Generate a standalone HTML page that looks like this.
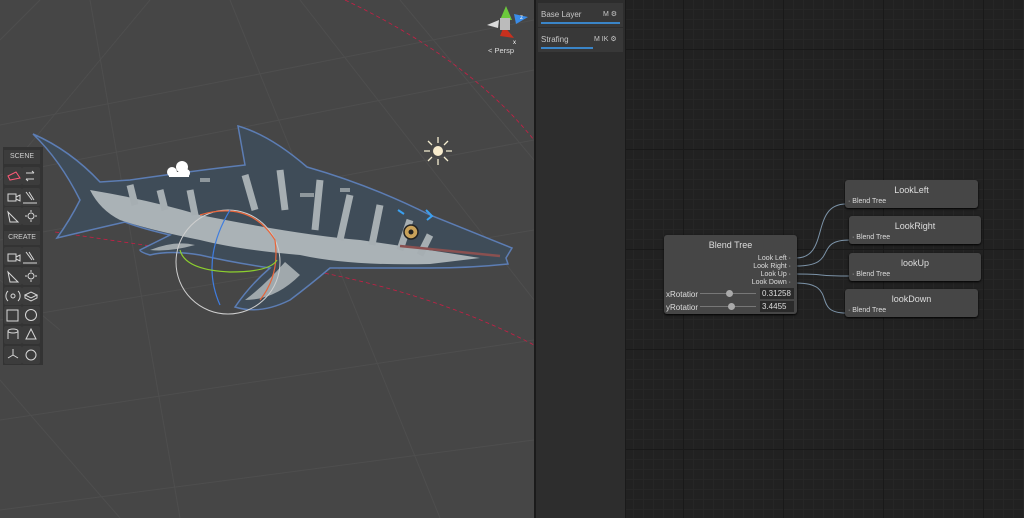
<!DOCTYPE html>
<html><head><meta charset="utf-8"><style>
*{margin:0;padding:0;box-sizing:border-box}
body{width:1024px;height:518px;overflow:hidden;background:#202020;font-family:"Liberation Sans",sans-serif;position:relative}
#scene{position:absolute;left:0;top:0;width:534px;height:518px;background:#464646;overflow:hidden}
#sep1{position:absolute;left:534px;top:0;width:2px;height:518px;background:#1b1b1b}
#layers{position:absolute;left:536px;top:0;width:89px;height:518px;background:#2d2d2d}
#sep2{position:absolute;left:625px;top:0;width:1px;height:518px;background:#1a1a1a}
#graph{position:absolute;left:626px;top:0;width:398px;height:518px;background-color:#212121;
background-image:linear-gradient(#191919 1px,transparent 1px),linear-gradient(90deg,#191919 1px,transparent 1px),linear-gradient(#262626 1px,transparent 1px),linear-gradient(90deg,#262626 1px,transparent 1px);
background-size:100px 100px,100px 100px,10px 10px,10px 10px;background-position:0 49px,57px 0,0 9px,7px 0}
.layer{position:absolute;left:2px;width:85px;height:24px;background:#383838;color:#c8c8c8;font-size:8px}
.layer span{position:absolute;left:3px;top:7px}
.layer b{position:absolute;top:7px;font-weight:normal;font-size:7px}
.layer i{position:absolute;left:3px;bottom:3px;height:2px;background:#3a85c8}
.node{position:absolute;background:#464646;border-radius:3px;color:#ddd;font-size:9px;box-shadow:0 1px 2px #000}
.node .t{position:absolute;width:100%;text-align:center;top:5px}
.node .s{position:absolute;left:3px;bottom:3px;font-size:7px;color:#ddd}
.tb{position:absolute;left:2px;background:#333;width:40px}
.cell{position:absolute;width:18px;height:18px;background:#3c3c3c;border-radius:2px}
</style></head><body>
<div id="scene">
<svg width="534" height="518" style="position:absolute;left:0;top:0">
<g stroke="#4e4e4e" stroke-width="1" fill="none">
<path d="M0 125 L534 20"/><path d="M0 175 L534 70"/><path d="M0 240 L534 140"/><path d="M0 320 L534 230"/><path d="M0 420 L534 340"/><path d="M0 510 L534 440"/>
<path d="M90 0 L180 518"/><path d="M230 0 L440 518"/><path d="M40 0 L0 40"/><path d="M300 0 L534 300"/><path d="M400 0 L534 160"/><path d="M150 0 L0 180"/><path d="M0 380 L120 518"/><path d="M0 280 L60 330"/>
</g>
<path d="M345 0 Q470 60 534 140" stroke="#c81e45" stroke-width="0.8" stroke-dasharray="4 3" fill="none"/>
<path d="M55 232 L260 262 Q420 285 534 345" stroke="#c81e45" stroke-width="0.8" stroke-dasharray="4 3" fill="none"/>
<path d="M33 134 Q70 150 100 182 L130 180 Q200 170 245 165 L238 126 Q270 135 307 167 Q370 185 430 215 Q480 235 512 248 L506 258 L508 264 Q470 268 430 268 L330 268 Q310 285 290 300 Q260 315 235 307 Q250 285 270 268 Q230 262 200 255 Q170 250 150 255 Q140 252 140 250 Q160 240 170 235 Q140 228 125 222 Q90 230 57 238 Q70 220 80 200 Q60 160 33 134Z" fill="#3f4c58" stroke="#5c7db4" stroke-width="1.5"/>
<path d="M90 190 Q150 200 200 215 Q300 235 360 240 Q430 250 480 258 L430 264 Q350 266 300 255 Q240 250 200 240 Q150 230 120 220 Q100 210 90 190Z" fill="#aab2b6"/>
<path d="M245 175 L255 210 M280 170 L285 210 M320 180 L315 230 M350 195 L340 240 M380 205 L372 245 M410 220 L400 250 M190 190 L195 215 M160 190 L165 210 M130 185 L135 205 M430 235 L420 255" stroke="#a6aeb2" stroke-width="7" fill="none"/>
<path d="M200 180 h10 M300 195 h14 M340 190 h10" stroke="#8e979c" stroke-width="4"/>
<path d="M285 262 Q265 285 245 300 Q275 300 300 275Z" fill="#a0a8ac"/>
<path d="M150 250 Q175 240 195 245 Q170 252 150 250Z" fill="#a0a8ac"/>
<circle cx="411" cy="232" r="7" fill="#c9a25a" stroke="#222" stroke-width="1.5"/><circle cx="411" cy="232" r="2.5" fill="#222"/>
<path d="M400 246 L500 256" stroke="#8a5050" stroke-width="2.5"/>
<circle cx="228" cy="262" r="52" fill="none" stroke="#cfcfcf" stroke-width="1"/>
<path d="M200 215 Q250 200 275 240 Q280 275 260 300" stroke="#e8653a" stroke-width="1.2" fill="none"/>
<path d="M230 210 Q200 260 220 305" stroke="#3f7de0" stroke-width="1.2" fill="none"/>
<path d="M180 250 Q185 270 230 272 Q270 272 277 260" stroke="#8ccf2e" stroke-width="1.2" fill="none"/>
<path d="M398 210 L404 214 M426 210 L432 216 L427 220" stroke="#3aa0f0" stroke-width="2" fill="none"/>
<circle cx="172" cy="172" r="5" fill="#fff"/><circle cx="182" cy="167" r="6" fill="#fff"/><circle cx="186" cy="173" r="4" fill="#fff"/><rect x="169" y="172" width="20" height="5" fill="#fff"/>
<g stroke="#f4ecd0" stroke-width="1.3"><path d="M438 143v-6M438 159v6M430 151h-6M446 151h6M432 145l-4-4M444 145l4-4M432 157l-4 4M444 157l4 4"/></g>
<circle cx="438" cy="151" r="5" fill="#f8eccd"/>
<path d="M506 6 L512 20 L500 20Z" fill="#6cc83c"/><path d="M514 14 L528 17 L516 24Z" fill="#3a8ce8"/>
<path d="M487 25 L499 20 L498 28Z" fill="#dcdcdc"/><path d="M504 26 L514 38 L500 36Z" fill="#c8301e"/>
<rect x="500" y="18" width="10" height="12" fill="#bbb"/>
<text x="520" y="19" fill="#fff" font-size="6" font-family="Liberation Sans">z</text>
<text x="513" y="44" fill="#fff" font-size="6" font-family="Liberation Sans">x</text>
<text x="488" y="53" fill="#ddd" font-size="7.5" font-family="Liberation Sans">&lt; Persp</text>
</svg>
<div class="tb" style="top:147px;height:85px;left:3px"></div>
<div class="tb" style="top:230px;height:135px;left:3px"></div>
<div style="position:absolute;left:4px;top:150px;width:36px;height:14px;background:#3c3c3c;color:#cfcfcf;font-size:7px;text-align:center;line-height:14px">SCENE</div>
<div style="position:absolute;left:4px;top:231px;width:36px;height:14px;background:#3c3c3c;color:#cfcfcf;font-size:7px;text-align:center;line-height:14px">CREATE</div>
<div class="cell" style="left:4px;top:167px"></div><div class="cell" style="left:22px;top:167px"></div>
<div class="cell" style="left:4px;top:188px"></div><div class="cell" style="left:22px;top:188px"></div>
<div class="cell" style="left:4px;top:207px"></div><div class="cell" style="left:22px;top:207px"></div>
<div class="cell" style="left:4px;top:247px"></div><div class="cell" style="left:22px;top:247px"></div>
<div class="cell" style="left:4px;top:267px"></div><div class="cell" style="left:22px;top:267px"></div>
<div class="cell" style="left:4px;top:287px"></div><div class="cell" style="left:22px;top:287px"></div>
<div class="cell" style="left:4px;top:306px"></div><div class="cell" style="left:22px;top:306px"></div>
<div class="cell" style="left:4px;top:326px"></div><div class="cell" style="left:22px;top:326px"></div>
<div class="cell" style="left:4px;top:346px"></div><div class="cell" style="left:22px;top:346px"></div>
<svg width="44" height="370" style="position:absolute;left:0;top:0" fill="none" stroke="#d8d8d8" stroke-width="1">
<path d="M8 176 L16 172 L20 178 L10 180Z" stroke="#ff5a78"/><path d="M26 173h8M34 173l-2-2M26 179h8M26 179l2 2"/>
<rect x="8" y="194" width="8" height="7"/><path d="M16 197 l4-2v6l-4-2"/><path d="M26 192l6 8M29 192l5 8M23 203h14"/>
<path d="M8 212 L18 222 L10 222Z"/><circle cx="31" cy="216" r="3"/><path d="M31 210v2M31 220v2M25 216h2M35 216h2"/>
<rect x="8" y="254" width="8" height="7"/><path d="M16 257 l4-2v6l-4-2"/><path d="M26 252l6 8M29 252l5 8M23 263h14"/>
<path d="M8 272 L18 282 L10 282Z"/><circle cx="31" cy="276" r="3"/><path d="M31 270v2M31 280v2M25 276h2M35 276h2"/>
<circle cx="13" cy="296" r="2"/><path d="M8 291 a7 7 0 0 0 0 10M18 291 a7 7 0 0 1 0 10"/><path d="M25 295 l6-3 6 3-6 3z M25 295v3l6 3 6-3v-3"/>
<rect x="7" y="310" width="11" height="11"/><circle cx="31" cy="315" r="5.5"/>
<ellipse cx="13" cy="331" rx="5" ry="2"/><path d="M8 331v8M18 331v8"/><path d="M31 329l-5 10h10z"/>
<path d="M13 355v-6M13 355l-5 3M13 355l5 3"/><circle cx="31" cy="355" r="5"/>
</svg>
</div>
<div id="sep1"></div>
<div id="layers">
<div class="layer" style="top:3px"><span>Base Layer</span><b style="left:65px">M ⚙</b><i style="width:79px"></i></div>
<div class="layer" style="top:28px"><span>Strafing</span><b style="left:56px">M IK ⚙</b><i style="width:52px"></i></div>
</div>
<div id="sep2"></div>
<div id="graph"></div>
<svg width="1024" height="518" style="position:absolute;left:0;top:0" fill="none" stroke="#7c93a8" stroke-width="1">
<path d="M796 258 C830 258 810 204 846 204"/>
<path d="M796 266 C840 266 812 240 850 240"/>
<path d="M796 274 C830 274 812 276 850 276"/>
<path d="M796 283 C840 283 810 313 846 313"/>
</svg>
<div class="node" style="left:664px;top:235px;width:133px;height:79px">
<div class="t">Blend Tree</div>
<div style="position:absolute;right:6px;top:20px;text-align:right;font-size:7px;line-height:8px">Look Left ·<br>Look Right ·<br>Look Up ·<br>Look Down ·</div>
<div style="position:absolute;left:2px;top:55px;font-size:8px">xRotatior</div>
<div style="position:absolute;left:2px;top:68px;font-size:8px">yRotatior</div>
<div style="position:absolute;left:36px;top:58px;width:56px;height:1px;background:#777"></div>
<div style="position:absolute;left:36px;top:71px;width:56px;height:1px;background:#777"></div>
<div style="position:absolute;left:62px;top:55px;width:7px;height:7px;border-radius:50%;background:#aaa"></div>
<div style="position:absolute;left:64px;top:68px;width:7px;height:7px;border-radius:50%;background:#aaa"></div>
<div style="position:absolute;left:96px;top:53px;width:34px;height:11px;background:#2a2a2a;font-size:8px;padding-left:2px;line-height:11px;overflow:hidden">0.31258</div>
<div style="position:absolute;left:96px;top:66px;width:34px;height:11px;background:#2a2a2a;font-size:8px;padding-left:2px;line-height:11px;overflow:hidden">3.4455</div>
</div>
<div class="node" style="left:845px;top:180px;width:133px;height:28px"><div class="t">LookLeft</div><div class="s">· Blend Tree</div></div>
<div class="node" style="left:849px;top:216px;width:132px;height:28px"><div class="t">LookRight</div><div class="s">· Blend Tree</div></div>
<div class="node" style="left:849px;top:253px;width:132px;height:28px"><div class="t">lookUp</div><div class="s">· Blend Tree</div></div>
<div class="node" style="left:845px;top:289px;width:133px;height:28px"><div class="t">lookDown</div><div class="s">· Blend Tree</div></div>
</body></html>
